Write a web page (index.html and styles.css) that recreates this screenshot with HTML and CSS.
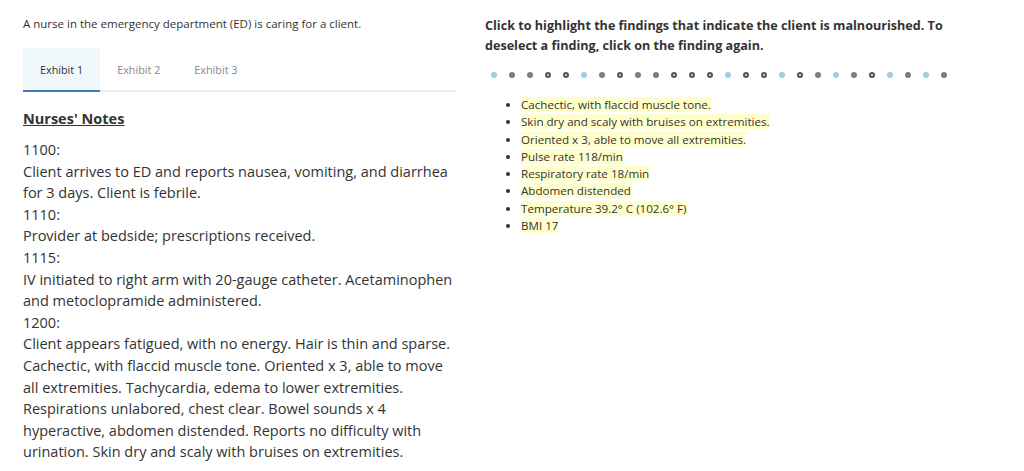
FILE: index.html
```html
<!DOCTYPE html>
<html>
<head>
<meta charset="utf-8">
<link rel="stylesheet" href="styles.css">
</head>
<body>
<div class="page">
  <div class="left">
    <p class="intro">A nurse in the emergency department (ED) is caring for a client.</p>
    <div class="tabs">
      <div class="tab active">Exhibit 1</div>
      <div class="tab">Exhibit 2</div>
      <div class="tab">Exhibit 3</div>
    </div>
    <h2 class="notes-title">Nurses' Notes</h2>
    <div class="notes">
      <div>1100:</div>
      <div>Client arrives to ED and reports nausea, vomiting, and diarrhea for 3 days. Client is febrile.</div>
      <div>1110:</div>
      <div>Provider at bedside; prescriptions received.</div>
      <div>1115:</div>
      <div>IV initiated to right arm with 20-gauge catheter. Acetaminophen and metoclopramide administered.</div>
      <div>1200:</div>
      <div>Client appears fatigued, with no energy. Hair is thin and sparse. Cachectic, with flaccid muscle tone. Oriented x 3, able to move all extremities. Tachycardia, edema to lower extremities. Respirations unlabored, chest clear. Bowel sounds x 4 hyperactive, abdomen distended. Reports no difficulty with urination. Skin dry and scaly with bruises on extremities.</div>
    </div>
  </div>
  <div class="right">
    <p class="prompt">Click to highlight the findings that indicate the client is malnourished. To deselect a finding, click on the finding again.</p>
    <div class="dots">
      <span class="dot b"></span><span class="dot g"></span><span class="dot g"></span><span class="dot o"></span><span class="dot o"></span><span class="dot b"></span><span class="dot g"></span><span class="dot o"></span><span class="dot g"></span><span class="dot g"></span><span class="dot o"></span><span class="dot o"></span><span class="dot o"></span><span class="dot b"></span><span class="dot o"></span><span class="dot o"></span><span class="dot b"></span><span class="dot o"></span><span class="dot g"></span><span class="dot b"></span><span class="dot g"></span><span class="dot o"></span><span class="dot b"></span><span class="dot g"></span><span class="dot b"></span><span class="dot g"></span>
    </div>
    <ul class="findings">
      <li><span class="hl">Cachectic, with flaccid muscle tone.</span></li>
      <li><span class="hl">Skin dry and scaly with bruises on extremities.</span></li>
      <li><span class="hl">Oriented x 3, able to move all extremities.</span></li>
      <li><span class="hl">Pulse rate 118/min</span></li>
      <li><span class="hl">Respiratory rate 18/min</span></li>
      <li><span class="hl">Abdomen distended</span></li>
      <li><span class="hl">Temperature 39.2° C (102.6° F)</span></li>
      <li><span class="hl">BMI 17</span></li>
    </ul>
  </div>
</div>
</body>
</html>
```

FILE: styles.css
```css
html, body {
  margin: 0;
  padding: 0;
  background: #fff;
}
body {
  font-family: "Open Sans", "Noto Sans", sans-serif;
  color: #333;
}
.page {
  display: flex;
  gap: 29px;
  padding: 15px 0 0 23px;
}
.left {
  width: 433px;
  flex: none;
}
.intro {
  margin: 0;
  font-size: 11.5px;
  line-height: 17px;
  color: #333;
}
.tabs {
  display: flex;
  margin-top: 16px;
  border-bottom: 2px solid #ececec;
}
.tab {
  padding: 14px 17px 12px;
  font-size: 10.8px;
  line-height: 16px;
  color: #888;
  margin-bottom: -2px;
  border-bottom: 2px solid transparent;
}
.tab.active {
  background: #f0f8fc;
  color: #333;
  border-bottom-color: #3a7ec4;
}
.notes-title {
  margin: 17px 0 0;
  font-size: 14.5px;
  line-height: 20px;
  font-weight: 700;
  text-decoration: underline;
  color: #333;
}
.notes {
  margin-top: 10px;
  font-size: 14.5px;
  line-height: 21.6px;
  color: #333;
}
.right {
  width: 470px;
  flex: none;
  padding-top: 1px;
}
.prompt {
  margin: 0;
  font-size: 12.6px;
  line-height: 19.5px;
  font-weight: 700;
  color: #333;
}
.dots {
  display: flex;
  gap: 12px;
  margin: 17px 0 0 6px;
  height: 6px;
  align-items: center;
}
.dot {
  width: 6px;
  height: 6px;
  border-radius: 50%;
  flex: none;
  box-sizing: border-box;
}
.dot.b { background: #9fcde2; }
.dot.g { background: #7d7d7d; }
.dot.o { background: #e8e8e8; border: 2px solid #555; }
.findings {
  margin: 18px 0 0;
  padding-left: 36px;
  font-size: 11.6px;
  line-height: 17.3px;
  color: #333;
}
.hl {
  background: #ffffcc;
}
```
